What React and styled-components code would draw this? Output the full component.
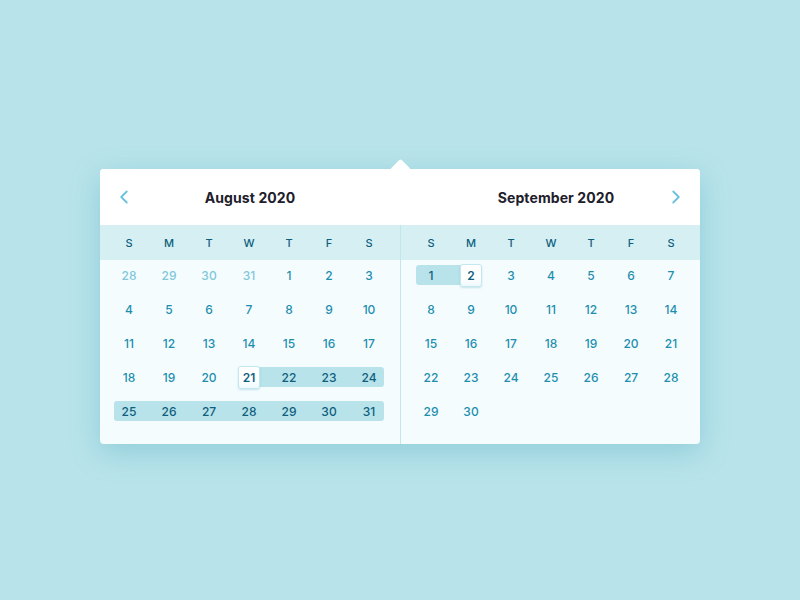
import React from 'react';
import styled, { createGlobalStyle, css } from 'styled-components';
import { ChevronLeft, ChevronRight } from 'lucide-react';

const colors = {
  page: '#b8e3ea',
  band: '#d5eff3',
  body: '#f5fcfe',
  divider: '#c2e6ec',
  range: '#b8e3ea',
  day: '#1d8fae',
  muted: '#80c8da',
  dark: '#0f5f7e',
  title: '#1d202b',
  chevron: '#6ac1df'
};

const GlobalStyle = createGlobalStyle`
  html, body {
    margin: 0;
    padding: 0;
    background: ${colors.page};
    font-family: Inter, "Noto Sans", sans-serif;
  }
`;

const Page = styled.div`
  display: flex;
  justify-content: center;
  align-items: flex-start;
  min-height: 100vh;
  padding-top: 169px;
  box-sizing: border-box;
`;

const Card = styled.div`
  position: relative;
  width: 600px;
  border-radius: 4px;
  background: ${colors.body};
  box-shadow: 0 8px 28px rgba(70, 165, 185, 0.35);

  /* little pointer on top of the popover */
  &::before {
    content: '';
    position: absolute;
    top: -7px;
    left: 293px;
    width: 15px;
    height: 15px;
    background: #fff;
    border-radius: 2px;
    transform: rotate(45deg);
  }
`;

const Header = styled.div`
  display: grid;
  grid-template-columns: 1fr 1fr;
  height: 56px;
  background: #fff;
  border-radius: 4px 4px 0 0;
  position: relative;
`;

const HeaderHalf = styled.div`
  display: grid;
  grid-template-columns: ${({ $right }) => ($right ? '60px 1fr 48px' : '48px 1fr 48px')};
  align-items: center;
`;

const NavButton = styled.button`
  display: flex;
  align-items: center;
  justify-content: center;
  border: none;
  background: none;
  padding: 0;
  color: ${colors.chevron};
  justify-self: center;

  &:hover {
    cursor: pointer;
  }
`;

const Title = styled.h2`
  margin: 0;
  font-size: 14px;
  font-weight: 700;
  color: ${colors.title};
  text-align: center;
  letter-spacing: 0.1px;
`;

const Months = styled.div`
  display: grid;
  grid-template-columns: 300px 300px;
`;

const MonthPanel = styled.div`
  border-left: ${({ $right }) => ($right ? `1px solid ${colors.divider}` : 'none')};
`;

const Weekdays = styled.div`
  display: grid;
  grid-template-columns: repeat(7, 40px);
  height: 35px;
  align-items: center;
  padding: 0 ${({ $right }) => ($right ? '9px 0 10px' : '11px 0 9px')};
  background: ${colors.band};
`;

const Weekday = styled.span`
  text-align: center;
  font-size: 11px;
  font-weight: 500;
  color: ${colors.dark};
`;

const Days = styled.div`
  display: grid;
  grid-template-columns: repeat(7, 40px);
  grid-auto-rows: 20px;
  row-gap: 14px;
  padding: 5px ${({ $right }) => ($right ? '9px 23px 10px' : '11px 23px 9px')};
`;

const Day = styled.div`
  display: flex;
  align-items: center;
  justify-content: center;
  height: 20px;
  font-size: 12px;
  font-weight: 500;
  color: ${({ $muted }) => ($muted ? colors.muted : colors.day)};

  ${({ $inRange }) =>
    $inRange &&
    css`
      background: ${colors.range};
      color: ${colors.dark};
    `}

  ${({ $edge }) =>
    $edge === 'start' &&
    css`
      background: linear-gradient(to right, transparent 50%, ${colors.range} 50%);
    `}

  ${({ $edge }) =>
    $edge === 'end' &&
    css`
      background: linear-gradient(to right, ${colors.range} 50%, transparent 50%);
    `}

  ${({ $inRange, $rowStart }) =>
    $inRange &&
    $rowStart &&
    css`
      margin-left: 5px;
      padding-right: 5px;
      border-radius: 3px 0 0 3px;
    `}

  ${({ $inRange, $rowEnd }) =>
    $inRange &&
    $rowEnd &&
    css`
      margin-right: 5px;
      padding-left: 5px;
      border-radius: 0 3px 3px 0;
    `}
`;

const SelectedBox = styled.span`
  display: flex;
  align-items: center;
  justify-content: center;
  width: 20px;
  height: 21px;
  margin: -1px 0;
  background: linear-gradient(#fff 60%, #eef9fc);
  border: 1px solid #c4e8ef;
  border-radius: 3px;
  box-shadow: 0 1px 2px rgba(60, 150, 175, 0.25);
  color: ${colors.dark};
  font-weight: 600;
`;

const weekdays = ['S', 'M', 'T', 'W', 'T', 'F', 'S'];

const range = { start: ['aug', 21], end: ['sep', 2] };

const months = [
  {
    key: 'aug',
    title: 'August 2020',
    lead: [28, 29, 30, 31],
    length: 31,
    inRange: (d) => d > 21
  },
  {
    key: 'sep',
    title: 'September 2020',
    lead: [],
    length: 30,
    inRange: (d) => d < 2
  }
];

function MonthGrid({ month, right }) {
  const cells = [
    ...month.lead.map((d) => ({ d, muted: true })),
    ...Array.from({ length: month.length }, (_, i) => ({ d: i + 1 }))
  ];

  return (
    <MonthPanel $right={right}>
      <Weekdays $right={right}>
        {weekdays.map((w, i) => (
          <Weekday key={i}>{w}</Weekday>
        ))}
      </Weekdays>
      <Days $right={right}>
        {cells.map((c, i) => {
          let edge = null;
          if (!c.muted && range.start[0] === month.key && range.start[1] === c.d) edge = 'start';
          if (!c.muted && range.end[0] === month.key && range.end[1] === c.d) edge = 'end';
          const inRange = !c.muted && !edge && month.inRange(c.d);
          return (
            <Day
              key={i}
              $muted={c.muted}
              $edge={edge}
              $inRange={inRange}
              $rowStart={i % 7 === 0}
              $rowEnd={i % 7 === 6}
            >
              {edge ? <SelectedBox>{c.d}</SelectedBox> : c.d}
            </Day>
          );
        })}
      </Days>
    </MonthPanel>
  );
}

export default function App() {
  return (
    <>
      <GlobalStyle />
      <Page>
        <Card>
          <Header>
            <HeaderHalf>
              <NavButton aria-label="Previous month">
                <ChevronLeft size={22} strokeWidth={2} />
              </NavButton>
              <Title>{months[0].title}</Title>
              <span />
            </HeaderHalf>
            <HeaderHalf $right>
              <span />
              <Title>{months[1].title}</Title>
              <NavButton aria-label="Next month">
                <ChevronRight size={22} strokeWidth={2} />
              </NavButton>
            </HeaderHalf>
          </Header>
          <Months>
            <MonthGrid month={months[0]} />
            <MonthGrid month={months[1]} right />
          </Months>
        </Card>
      </Page>
    </>
  );
}
